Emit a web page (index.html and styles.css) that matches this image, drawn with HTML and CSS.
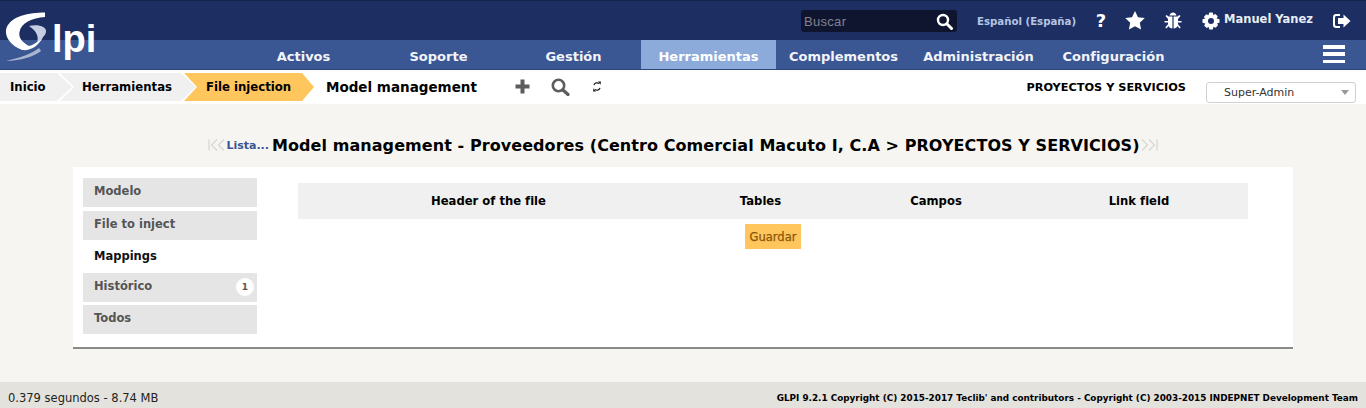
FILE: index.html
```html
<!DOCTYPE html>
<html lang="es">
<head>
<meta charset="utf-8">
<title>Model management - GLPI</title>
<link rel="stylesheet" href="styles.css">
</head>
<body>
<header class="header">
  <div class="logo">
    <svg class="logo-g" width="44" height="52" viewBox="0 0 44 52"><path fill="#c4cee2" d="M24 14 C32 12 42 14 41 20 C40 25 35 27 32 31 C34 25 32 19 24 14 Z"/><path fill="#fff" d="M40 .5 C24 .5 6 4 1.500 16 C-1 24 5 33 17 38 C25 39 33 35 38 25 C33 30 28 33 24 34 C17 30 13.500 26 14.500 20 C16 11 27 6 40 5 Z"/><path fill="#aab6d0" d="M34 36 C26 42 14 46 1 49 C16 48.500 28 45 36 39 Z"/></svg>
    <span class="logo-text">lpi</span>
  </div>
  <div class="top">
    <div class="search"><span class="search-ph">Buscar</span>
      <svg class="search-ico" width="17" height="17" viewBox="0 0 17 17"><circle cx="7" cy="7" r="5" fill="none" stroke="#fff" stroke-width="2.4"/><path d="M10.8 10.8 L15.5 15.5" stroke="#fff" stroke-width="3" stroke-linecap="round"/></svg>
    </div>
    <span class="lang">Español (España)</span>
    <span class="help">?</span>
    <svg class="ico-star" width="20" height="19" viewBox="0 0 20 19"><path fill="#fff" d="M10 0 L13 6.2 L19.8 7.1 L14.8 11.8 L16.1 18.6 L10 15.3 L3.9 18.6 L5.2 11.8 L.2 7.1 L7 6.2 Z"/></svg>
    <svg class="ico-bug" width="18" height="18" viewBox="0 0 18 18"><path fill="#fff" d="M5.5 3.5 C6 1.500 7.500 .5 9 .5 C10.500 .5 12 1.500 12.500 3.500 Z M4.500 4.500 L8.400 4.500 L8.400 16.500 C6.500 16.500 5 15.500 4.500 14 L2.500 16.500 L1.300 15.500 L4 12.300 L4 10.500 L.5 10.500 L.5 9 L4 9 L4 7 L1.500 4 L2.700 3 Z M13.500 4.500 L9.600 4.500 L9.600 16.500 C11.500 16.500 13 15.500 13.500 14 L15.500 16.500 L16.700 15.500 L14 12.300 L14 10.500 L17.500 10.500 L17.500 9 L14 9 L14 7 L16.500 4 L15.300 3 Z"/></svg>
    <svg class="ico-cog" width="18" height="18" viewBox="0 0 18 18"><path fill="#fff" fill-rule="evenodd" d="M7.300 .5 L10.700 .5 L11.200 2.900 L13.300 2 L15.800 4.300 L14.700 6.400 L17.500 7.300 L17.500 10.700 L15.100 11.200 L16 13.300 L13.700 15.800 L11.600 14.700 L10.700 17.500 L7.300 17.500 L6.800 15.100 L4.700 16 L2.200 13.700 L3.300 11.600 L.5 10.700 L.5 7.300 L2.900 6.800 L2 4.700 L4.300 2.200 L6.400 3.300 Z M9 6 A3 3 0 1 0 9 12 A3 3 0 1 0 9 6 Z"/></svg>
    <span class="user">Manuel Yanez</span>
    <svg class="ico-out" width="18" height="16" viewBox="0 0 18 16"><path fill="#fff" d="M7 1 L7 3 L3.500 3 C2.700 3 2 3.700 2 4.500 L2 11.500 C2 12.300 2.700 13 3.500 13 L7 13 L7 15 L3 15 C1.300 15 0 13.700 0 12 L0 4 C0 2.300 1.300 1 3 1 Z M10.500 1.500 L17.500 8 L10.500 14.500 L10.500 11 L5 11 L5 5 L10.500 5 Z"/></svg>
  </div>
  <nav class="nav">
    <a class="nav-item">Activos</a>
    <a class="nav-item">Soporte</a>
    <a class="nav-item">Gestión</a>
    <a class="nav-item nav-active">Herramientas</a>
    <a class="nav-item">Complementos</a>
    <a class="nav-item">Administración</a>
    <a class="nav-item">Configuración</a>
    <span class="burger"><i></i><i></i><i></i></span>
  </nav>
</header>
<div class="crumbs">
  <a class="crumb crumb-first">Inicio</a>
  <a class="crumb crumb-second">Herramientas</a>
  <a class="crumb crumb-third">File injection</a>
  <span class="crumb-title">Model management</span>
  <svg class="ico-plus" width="15" height="15" viewBox="0 0 15 15"><path fill="#5d5d5d" d="M5.500 .5 L9.500 .5 L9.500 5.500 L14.500 5.500 L14.500 9.500 L9.500 9.500 L9.500 14.500 L5.500 14.500 L5.500 9.500 L.5 9.500 L.5 5.500 L5.500 5.500 Z"/></svg>
  <svg class="ico-find" width="19" height="18" viewBox="0 0 19 18"><circle cx="7.500" cy="7.500" r="5.700" fill="none" stroke="#5d5d5d" stroke-width="2.600"/><path d="M12 12 L17 16.500" stroke="#5d5d5d" stroke-width="3.200" stroke-linecap="round"/></svg>
  <svg class="ico-reload" width="10" height="11" viewBox="0 0 10 11"><path fill="none" stroke="#222" stroke-width="1.300" d="M2 4 A3.200 3.200 0 0 1 7 2.500 M8 7 A3.200 3.200 0 0 1 3 8.500"/><path fill="#222" d="M6 .5 L9 .5 L8.500 3.800 Z M4 10.500 L1 10.500 L1.500 7.200 Z"/></svg>
  <span class="entity">PROYECTOS Y SERVICIOS</span>
  <div class="profile"><span>Super-Admin</span><b class="caret"></b></div>
</div>
<main class="main">
  <div class="title-row">
    <svg class="pager" width="18" height="12" viewBox="0 0 18 12"><path fill="none" stroke="#d6d6d6" stroke-width="1.200" d="M1 .5 L1 11.500 M9 .5 L3.500 6 L9 11.500 M16 .5 L10.500 6 L16 11.500"/></svg>
    <a class="list-link">Lista...</a>
    <h1 class="title">Model management - Proveedores (Centro Comercial Macuto I, C.A &gt; PROYECTOS Y SERVICIOS)</h1>
    <svg class="pager" width="18" height="12" viewBox="0 0 18 12"><path fill="none" stroke="#d6d6d6" stroke-width="1.200" d="M17 .5 L17 11.500 M9 .5 L14.500 6 L9 11.500 M2 .5 L7.500 6 L2 11.500"/></svg>
  </div>
  <section class="panel">
    <ul class="tabs">
      <li class="tab tab-a">Modelo</li>
      <li class="tab tab-b">File to inject</li>
      <li class="tab tab-current">Mappings</li>
      <li class="tab tab-c">Histórico<span class="badge">1</span></li>
      <li class="tab tab-d">Todos</li>
    </ul>
    <div class="content">
      <div class="thead">
        <span class="th th-1">Header of the file</span>
        <span class="th th-2">Tables</span>
        <span class="th th-3">Campos</span>
        <span class="th th-4">Link field</span>
      </div>
      <div class="actions"><button class="save">Guardar</button></div>
    </div>
  </section>
</main>
<footer class="footer">
  <span class="timing">0.379 segundos - 8.74 MB</span>
  <span class="copy">GLPI 9.2.1 Copyright (C) 2015-2017 Teclib' and contributors - Copyright (C) 2003-2015 INDEPNET Development Team</span>
</footer>
</body>
</html>
```
FILE: styles.css
```css
* { box-sizing: border-box; }
html, body { margin: 0; padding: 0; }
body {
  height: 408px;
  overflow: hidden;
  display: flex;
  flex-direction: column;
  background: #f6f5f1;
  font-family: "DejaVu Sans", Verdana, sans-serif;
  color: #000;
}

/* header */
.header { position: relative; height: 70px; flex: none; }
.logo { position: absolute; left: 5px; top: 12px; width: 95px; height: 50px; }
.logo-g { position: absolute; left: 0; top: 0; }
.logo-text {
  position: absolute; left: 47px; top: -1px;
  font: 700 38px/56px "Liberation Sans", sans-serif;
  color: #fff;
}
.top {
  height: 40px;
  background: #1d2e62;
  border-top: 1px solid #14244f;
  display: flex;
  align-items: center;
  padding-left: 801px;
}
.search {
  width: 156px; height: 22px; margin-top: 1px;
  background: #10152f; border-radius: 3px;
  display: flex; align-items: center; justify-content: space-between;
  padding: 0 4px 0 3px;
}
.search-ph { font: 13px "Liberation Sans", sans-serif; color: #80838f; letter-spacing: .3px; }
.search-ico { margin-top: 1px; }
.lang { margin-left: 20px; width: 98px; white-space: nowrap; font-size: 10.2px; font-weight: 700; color: #b4c4e2; margin-top: 1px; }
.help { margin-left: 20px; width: 12px; text-align: center; font-size: 18px; font-weight: 700; color: #fff; }
.ico-star { margin-left: 18px; }
.ico-bug { margin-left: 19px; }
.ico-cog { margin-left: 20px; }
.user { margin-left: 4px; width: 90px; white-space: nowrap; font-size: 11.5px; font-weight: 700; color: #e8edf6; margin-top: -3px; }
.ico-out { margin-left: 19px; }

.nav {
  height: 30px;
  background: #3a5693;
  border-bottom: 1px solid #2d4479;
  display: flex;
  padding-left: 236px;
}
.nav-item {
  width: 135px; height: 29px;
  display: flex; align-items: center; justify-content: center;
  padding-top: 3px;
  font-size: 13px; font-weight: 700; color: #f2f4f9; white-space: nowrap;
}
.nav-active { background: #8cabda; color: #fff; }
.burger {
  margin-left: 142px; margin-top: 5px;
  width: 22px; height: 18px;
  display: flex; flex-direction: column; justify-content: space-between;
}
.burger i { display: block; height: 3.500px; background: #fff; }

/* breadcrumb row */
.crumbs {
  height: 34px; flex: none;
  background: #fff;
  display: flex;
  align-items: center;
  padding-top: 3px;
}
.crumb {
  height: 28px;
  margin-top: -3px;
  display: flex; align-items: center;
  font-size: 11.7px; font-weight: 700; color: #000; white-space: nowrap;
  background: #f0f0f0;
  clip-path: polygon(0 0, calc(100% - 15px) 0, 100% 50%, calc(100% - 15px) 100%, 0 100%, 14px 50%);
}
.crumb-first { width: 72px; padding-left: 10px; clip-path: polygon(0 0, calc(100% - 15px) 0, 100% 50%, calc(100% - 15px) 100%, 0 100%); }
.crumb-second { width: 136px; margin-left: -12px; padding-left: 22px; }
.crumb-third {
  width: 130px; margin-left: -12px; padding-left: 22px; background: #ffc65d;
  clip-path: polygon(0 0, calc(100% - 12px) 0, 100% 50%, calc(100% - 12px) 100%, 0 100%, 13px 50%);
}
.crumb-title { margin-left: 12px; font-size: 13.5px; font-weight: 700; margin-top: -3px; white-space: nowrap; width: 189px; }
.ico-plus { margin-top: -4px; }
.ico-find { margin-left: 21px; margin-top: -3px; }
.ico-reload { margin-left: 22px; margin-top: -5px; }
.entity { margin-left: auto; font-size: 11.3px; font-weight: 700; white-space: nowrap; margin-top: -3px; }
.profile {
  width: 150px; height: 21px;
  margin: 8px 10px 0 20px;
  background: #fff;
  border: 1px solid #d0d0d0; border-radius: 3px;
  display: flex; align-items: center; justify-content: space-between;
  padding: 0 6px 0 17px;
  font-size: 11px; color: #333;
}
.caret { width: 0; height: 0; border: 4px solid transparent; border-top: 5px solid #999; border-bottom: 0; }

/* main */
.main { flex: 1; padding: 0 73px; }
.title-row {
  height: 63px;
  display: flex; align-items: center; justify-content: center;
  padding-top: 19px;
  white-space: nowrap;
}
.list-link { font-size: 11px; font-weight: 700; color: #3a5693; margin-right: 3px; }
.title { margin: 0; font-size: 16px; letter-spacing: .07px; font-weight: 700; }
.panel {
  height: 182px;
  background: #fff;
  border-bottom: 2px solid #8a8a8a;
  display: flex;
  padding: 11px 0 0 10px;
}
.tabs { list-style: none; margin: 0; padding: 0; width: 174px; flex: none; }
.tab {
  position: relative;
  height: 29px;
  padding: 6px 0 0 11px;
  background: #e5e5e5;
  font-size: 11.500px; font-weight: 700; color: #555;
}
.tab-a { margin-bottom: 4px; }
.tab-current { height: 33px; padding-top: 9px; background: #fff; color: #111; }
.tab-c { margin-bottom: 3px; }
.badge {
  position: absolute; right: 3px; top: 5px;
  width: 18px; height: 18px; border-radius: 50%;
  background: #fff; color: #555;
  font-size: 9px; line-height: 18px; text-align: center;
}
.content { margin-left: 41px; width: 950px; padding-top: 5px; }
.thead { height: 36px; background: #f0f0f0; display: flex; align-items: center; }
.th { font-size: 11.6px; font-weight: 700; text-align: center; white-space: nowrap; }
.th-1 { width: 381px; }
.th-2 { width: 163px; }
.th-3 { width: 188px; }
.th-4 { width: 218px; }
.actions { display: flex; justify-content: center; padding-top: 5px; }
.save {
  width: 56px; height: 25px; padding: 0;
  background: #ffc65d; border: 0;
  font: 400 11.500px "DejaVu Sans", sans-serif; color: #8a5608;
  -webkit-text-stroke: .25px #8a5608;
}

/* footer */
.footer {
  height: 26px; flex: none;
  background: #e3e2dd;
  display: flex; align-items: center; justify-content: space-between;
  padding: 5px 8px 0;
}
.timing { font-size: 11.500px; color: #222; }
.copy { font-size: 8.850px; font-weight: 700; color: #000; white-space: nowrap; }
```
